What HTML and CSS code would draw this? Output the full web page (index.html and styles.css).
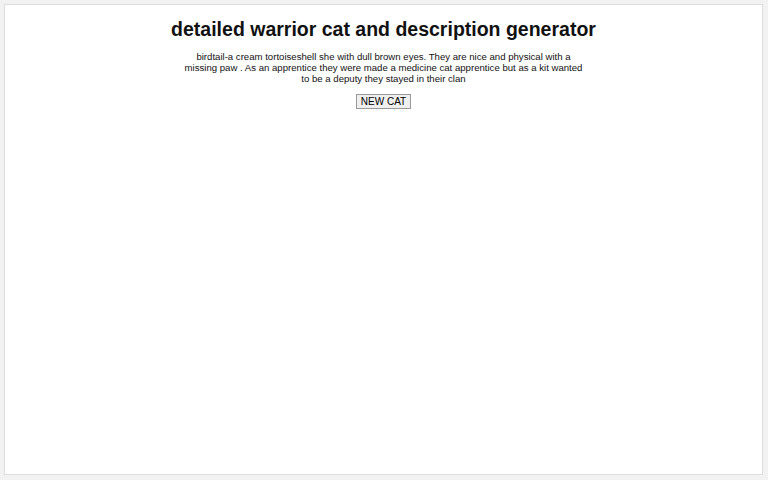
FILE: index.html
```html
<!DOCTYPE html>
<html>
<head>
  <title>Warrior Cat Generator</title>
  <link rel="stylesheet" href="styles.css">
</head>
<body>
<div class="page">
  <h1>detailed warrior cat and description generator</h1>
  <p id="catText" class="cat-text">birdtail-a cream tortoiseshell she with dull brown eyes. They are nice and physical with a missing paw . As an apprentice they were made a medicine cat apprentice but as a kit wanted to be a deputy they stayed in their clan</p>
  <button id="newCat" class="new-cat">NEW CAT</button>
</div>
</body>
</html>
```

FILE: styles.css
```css
html {
  background-color: #f2f2f2;
}
body {
  margin: 4px 5px 4px 4px;
  font-family: "Liberation Sans", Arial, sans-serif;
}
.page {
  height: 471px;
  background-color: #fff;
  border: 1px solid #ddd;
  text-align: center;
  box-sizing: border-box;
}
h1 {
  font-size: 19.5px;
  margin: 13px 0 0;
  color: #111;
}
.cat-text {
  width: 400px;
  margin: 10px auto 7px;
  font-size: 9.6px;
  line-height: 11px;
  color: #111;
}
.new-cat {
  font-family: "Liberation Sans", Arial, sans-serif;
  font-size: 10px;
  padding: 1px 4px;
  border: 1px solid #999;
  background-color: #efefef;
  border-radius: 0;
}
```
